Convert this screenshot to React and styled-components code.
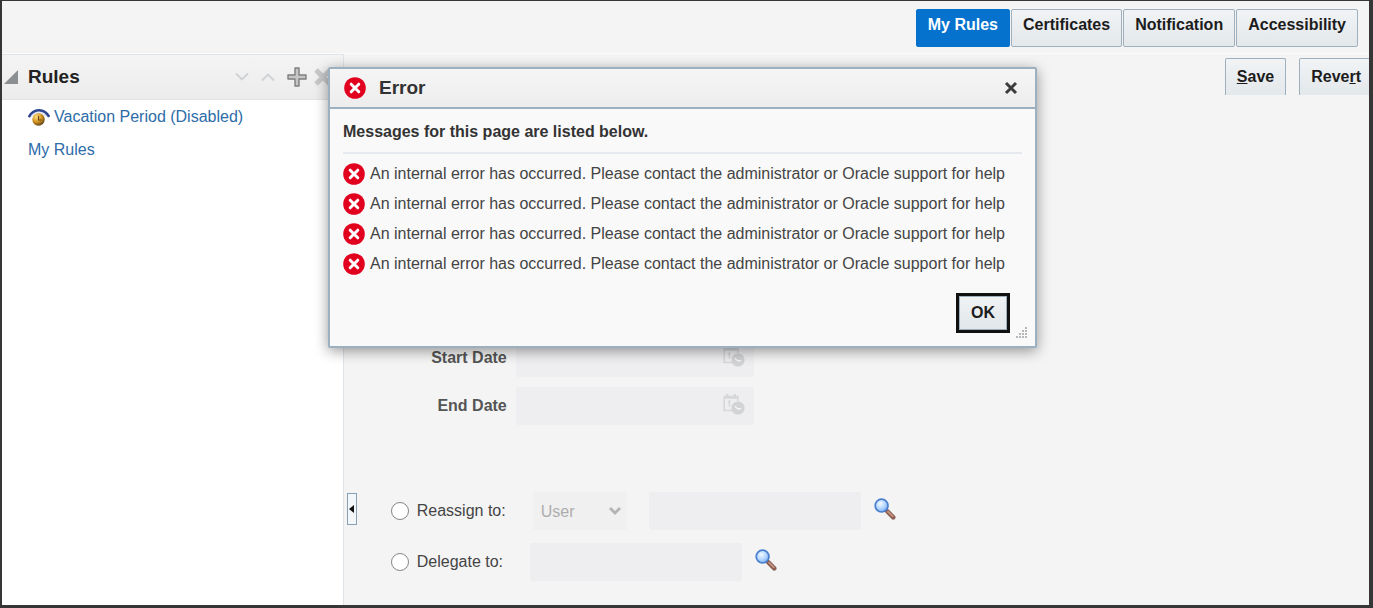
import React, { useState } from 'react'
import styled, { createGlobalStyle } from 'styled-components'

const frame = '#363636';
const pageBg = '#f4f4f4';
const line = '#dfe4e9';
const buttonLine = '#9eb0be';
const dialogLine = '#9cb0bf';
const link = '#2d6ca8';
const fieldBg = '#eeeef0';
const fontBase = '16px';
const fontTitle = '19px';

const tabs = ['My Rules', 'Certificates', 'Notification', 'Accessibility'];

const messages = [
    'An internal error has occurred. Please contact the administrator or Oracle support for help',
    'An internal error has occurred. Please contact the administrator or Oracle support for help',
    'An internal error has occurred. Please contact the administrator or Oracle support for help',
    'An internal error has occurred. Please contact the administrator or Oracle support for help',
];

function ErrorIcon() {
    return (
        <svg width="22" height="22" viewBox="0 0 22 22" aria-hidden="true">
            <circle cx="11" cy="11" r="10.8" fill="#e2001f" />
            <path d="M7.2 7.2l7.6 7.6M14.8 7.2l-7.6 7.6" stroke="#fff" strokeWidth="3" strokeLinecap="round" />
        </svg>
    );
}

function EyeClockIcon() {
    return (
        <svg width="22" height="18" viewBox="0 0 22 18" aria-hidden="true">
            <defs>
                <radialGradient id="gold" cx="0.35" cy="0.3" r="0.8">
                    <stop offset="0" stopColor="#ffdf85" />
                    <stop offset="0.5" stopColor="#d3931f" />
                    <stop offset="1" stopColor="#4a3518" />
                </radialGradient>
            </defs>
            <path d="M1 9Q10 -2 21 9L15 8H6Z" fill="#e4e7ef" />
            <path d="M0.8 9.2C5 0.6 16 -0.6 21.2 9" fill="none" stroke="#2c4590" strokeWidth="2.6" />
            <circle cx="10.5" cy="11.5" r="6.2" fill="url(#gold)" />
            <path d="M10.5 8V12H13.5" fill="none" stroke="#6b4510" strokeWidth="1.1" />
        </svg>
    );
}

function CalendarClockIcon() {
    return (
        <svg width="22" height="22" viewBox="0 0 22 22" aria-hidden="true">
            <path d="M9 17.5H1.2V3.5H14.8V8" fill="none" stroke="#d6d7d9" strokeWidth="1.6" />
            <path d="M1 4.5H15" stroke="#d6d7d9" strokeWidth="2.4" />
            <path d="M4.3 1V4M11.7 1V4" stroke="#d6d7d9" strokeWidth="2.4" />
            <path d="M4.8 9.2L6.5 8.2V13.5" fill="none" stroke="#d6d7d9" strokeWidth="1.6" />
            <circle cx="15" cy="15" r="6.6" fill="#d2d3d5" />
            <path d="M11.8 13.2L14.6 15.7H18.2" fill="none" stroke="#f4f4f5" strokeWidth="1.4" />
        </svg>
    );
}

function SearchIcon() {
    return (
        <svg width="22" height="22" viewBox="0 0 22 22" aria-hidden="true">
            <defs>
                <radialGradient id="lens" cx="0.4" cy="0.35" r="0.65">
                    <stop offset="0" stopColor="#f3faff" />
                    <stop offset="0.55" stopColor="#b9d9ff" />
                    <stop offset="1" stopColor="#7fb1f2" />
                </radialGradient>
            </defs>
            <path d="M14 14L19.4 19.6" stroke="#777" strokeWidth="4.8" strokeLinecap="round" opacity="0.4" />
            <path d="M12.5 12.5L19.2 19.2" stroke="#8f5a4a" strokeWidth="4.2" strokeLinecap="round" />
            <path d="M14 13.6L18.8 18.4" stroke="#c39a8a" strokeWidth="1.6" strokeLinecap="round" />
            <circle cx="7.6" cy="7.6" r="6.4" fill="url(#lens)" stroke="#4a7fcf" strokeWidth="1.7" />
        </svg>
    );
}

function Field({ id, label }) {
    return (
        <DateRow>
            <DateLabel htmlFor={id}>{label}</DateLabel>
            <DateBox>
                <DateInput id={id} disabled />
                <FieldButton type="button" aria-label={`Select ${label}`} disabled>
                    <CalendarClockIcon />
                </FieldButton>
            </DateBox>
        </DateRow>
    );
}

function ErrorDialog({ onClose }) {
    return (
        <Dialog role="dialog" aria-labelledby="error-title">
            <DialogHeader>
                <ErrorIcon />
                <DialogTitle id="error-title">Error</DialogTitle>
                <IconButton type="button" aria-label="Close" onClick={onClose}>
                    <svg width="14" height="14" viewBox="0 0 14 14">
                        <path d="M2 2l10 10M12 2L2 12" stroke="#3c3c3c" strokeWidth="3" />
                    </svg>
                </IconButton>
            </DialogHeader>
            <DialogBody>
                <DialogIntro>Messages for this page are listed below.</DialogIntro>
                <MessageList>
                    {messages.map((message, i) => (
                        <Message key={i}>
                            <ErrorIcon />
                            {message}
                        </Message>
                    ))}
                </MessageList>
            </DialogBody>
            <DialogFooter>
                <OkButton type="button" onClick={onClose}>OK</OkButton>
                <svg width="13" height="13" viewBox="0 0 13 13" aria-hidden="true">
                    <path
                        d="M1 12H13M4 9H13M7 6H13M10 3H13"
                        stroke="#b4b8bb"
                        strokeWidth="2"
                        strokeDasharray="2 1"
                    />
                </svg>
            </DialogFooter>
        </Dialog>
    );
}

function App() {

    const [activeTab, setActiveTab] = useState('My Rules');
    const [open, setOpen] = useState(true);

    return (
        <Page>
            <GlobalStyle />
            <TopBar>
                {tabs.map(tab => (
                    <Tab key={tab} type="button" $active={tab === activeTab} onClick={() => setActiveTab(tab)}>{tab}</Tab>
                ))}
            </TopBar>
            <Content>
                <Sidebar>
                    <SidebarHeader>
                        <svg width="14" height="14" viewBox="0 0 14 14" aria-hidden="true">
                            <path d="M14 0V14H0Z" fill="#8b8f92" />
                        </svg>
                        <SidebarTitle>Rules</SidebarTitle>
                        <SidebarTools>
                            <IconButton type="button" aria-label="Move down" disabled>
                                <svg width="14" height="10" viewBox="0 0 14 10">
                                    <path d="M1 1.5l6 6 6-6" fill="none" stroke="#cfd2d4" strokeWidth="1.8" />
                                </svg>
                            </IconButton>
                            <IconButton type="button" aria-label="Move up" disabled>
                                <svg width="14" height="10" viewBox="0 0 14 10">
                                    <path d="M1 8.5l6-6 6 6" fill="none" stroke="#cfd2d4" strokeWidth="1.8" />
                                </svg>
                            </IconButton>
                            <IconButton type="button" aria-label="Add rule">
                                <svg width="20" height="20" viewBox="0 0 20 20">
                                    <path
                                        d="M8 1H12V8H19V12H12V19H8V12H1V8H8Z"
                                        fill="#c6c6c6"
                                        stroke="#7e7e7e"
                                        strokeWidth="1.4"
                                        strokeLinejoin="round"
                                    />
                                </svg>
                            </IconButton>
                            <IconButton type="button" aria-label="Delete rule" disabled>
                                <svg width="20" height="20" viewBox="0 0 20 20">
                                    <path d="M3 3l14 14M17 3L3 17" stroke="#c6c8ca" strokeWidth="5" />
                                </svg>
                            </IconButton>
                        </SidebarTools>
                    </SidebarHeader>
                    <RuleList>
                        <li>
                            <RuleLink href="#vacation"><EyeClockIcon />Vacation Period (Disabled)</RuleLink>
                        </li>
                        <li>
                            <RuleLink href="#rules">My Rules</RuleLink>
                        </li>
                    </RuleList>
                </Sidebar>
                <Splitter>
                    <SplitterHandle type="button" aria-label="Collapse pane">
                        <svg width="5" height="8" viewBox="0 0 5 8">
                            <path d="M5 0V8L0 4Z" fill="#111" />
                        </svg>
                    </SplitterHandle>
                </Splitter>
                <Main>
                    <Toolbar>
                        <ToolbarButton type="button"><u>S</u>ave</ToolbarButton>
                        <ToolbarButton type="button">Reve<u>r</u>t</ToolbarButton>
                    </Toolbar>
                    <Form>
                        <Field id="start" label="Start Date" />
                        <Field id="end" label="End Date" />
                        <Options>
                            <OptionRow>
                                <Option>
                                    <Radio type="radio" name="action" />
                                    Reassign to:
                                </Option>
                                <SelectBox>
                                    <Select aria-label="Reassign type" disabled>
                                        <option>User</option>
                                    </Select>
                                    <svg width="14" height="10" viewBox="0 0 14 10" aria-hidden="true">
                                        <path d="M2 2l5 5 5-5" fill="none" stroke="#b4b4b4" strokeWidth="2.8" />
                                    </svg>
                                </SelectBox>
                                <TextInput aria-label="Reassign to" disabled />
                                <FieldButton type="button" aria-label="Search reassignee">
                                    <SearchIcon />
                                </FieldButton>
                            </OptionRow>
                            <OptionRow>
                                <Option>
                                    <Radio type="radio" name="action" />
                                    Delegate to:
                                </Option>
                                <TextInput aria-label="Delegate to" disabled />
                                <FieldButton type="button" aria-label="Search delegate">
                                    <SearchIcon />
                                </FieldButton>
                            </OptionRow>
                        </Options>
                    </Form>
                </Main>
            </Content>
            {open && <ErrorDialog onClose={() => setOpen(false)} />}
        </Page>
    );
}

const GlobalStyle = createGlobalStyle`
    * {
        box-sizing: border-box;
        margin: 0;
        padding: 0;
    }

    body {
        background: ${frame};
    }

    body, button, input, select {
        font-family: "Liberation Sans", Arial, sans-serif;
        font-size: ${fontBase};
        color: #333;
    }

    svg {
        display: block;
        flex: none;
    }
`;

const Page = styled.div`
    position: relative;
    display: flex;
    flex-direction: column;
    min-height: 100vh;
    background: ${pageBg};
    border: solid ${frame};
    border-width: 1px 4px 3px 2px;
    overflow: hidden;
`;

const TopBar = styled.nav`
    display: flex;
    justify-content: flex-end;
    gap: 1px;
    padding: 8px 11px 6px;
    border-bottom: 1px solid #fbfbfb;
`;

const Tab = styled.button`
    height: 38px;
    padding: 0 11px 6px;
    font-weight: 700;
    color: ${({ $active }) => ($active ? '#fff' : '#1c1c1c')};
    background: ${({ $active }) => ($active ? '#0572ce' : 'linear-gradient(#f1f3f5, #e3e8eb)')};
    border: 1px solid ${({ $active }) => ($active ? '#0572ce' : buttonLine)};
    border-radius: 2px;
`;

const Content = styled.div`
    display: flex;
    flex: 1;
`;

const Sidebar = styled.aside`
    flex: none;
    width: 25%;
    background: #fff;
    border: solid ${line};
    border-width: 1px 1px 0 0;
`;

const SidebarHeader = styled.div`
    display: flex;
    align-items: center;
    height: 45px;
    padding: 0 10px 0 2px;
    background: linear-gradient(#f4f4f4, #ececec);
    border-bottom: 1px solid ${line};
`;

const SidebarTitle = styled.h2`
    margin-left: 10px;
    font-size: ${fontTitle};
    color: #222;
`;

const SidebarTools = styled.div`
    display: flex;
    align-items: center;
    gap: 12px;
    margin-left: auto;

    > :last-child {
        margin-left: -6px;
    }
`;

const IconButton = styled.button`
    display: flex;
    background: transparent;
    border: 0;
`;

const FieldButton = styled(IconButton)`
    padding-bottom: 4px;
`;

const RuleList = styled.ul`
    display: flex;
    flex-direction: column;
    gap: 13px;
    padding: 7px 26px;
    list-style: none;
`;

const RuleLink = styled.a`
    display: flex;
    align-items: center;
    gap: 4px;
    line-height: 20px;
    color: ${link};
    text-decoration: none;
`;

const Splitter = styled.div`
    flex: none;
    width: 12px;
    padding: 439px 0 0 3px;
`;

const SplitterHandle = styled.button`
    display: flex;
    align-items: center;
    justify-content: center;
    width: 10px;
    height: 32px;
    background: #f4f7f9;
    border: 1px solid #87a0b4;
`;

const Main = styled.main`
    flex: 1;
    min-width: 0;
`;

const Toolbar = styled.div`
    display: flex;
    justify-content: flex-end;
    gap: 13px;
    margin: 4px -4px 0 0;
`;

const ToolbarButton = styled.button`
    height: 37px;
    padding: 0 11px;
    font-weight: 700;
    color: #1c1c1c;
    background: linear-gradient(#f1f3f5, #e3e8eb);
    border: solid ${buttonLine};
    border-width: 1px 1px 0;
    border-radius: 2px 2px 0 0;
`;

const Form = styled.form`
    display: flex;
    flex-direction: column;
    gap: 10px;
    padding: 244px 0 24px 35px;
`;

const DateRow = styled.div`
    display: flex;
    align-items: center;
    gap: 9px;
`;

const DateLabel = styled.label`
    width: 116px;
    font-weight: 700;
    color: #555;
    text-align: right;
`;

const DateBox = styled.div`
    display: flex;
    align-items: center;
    width: 238px;
    height: 38px;
    padding-right: 9px;
    background: ${fieldBg};
    border-radius: 3px;
`;

const DateInput = styled.input`
    flex: 1;
    min-width: 0;
    height: 100%;
    background: transparent;
    border: 0;
`;

const Options = styled.div`
    display: flex;
    flex-direction: column;
    gap: 13px;
    margin-top: 57px;
`;

const OptionRow = styled.div`
    display: flex;
    align-items: center;
`;

const Option = styled.label`
    display: flex;
    align-items: center;
    gap: 8px;
    margin-right: 27px;
    color: #444;
`;

const Radio = styled.input`
    appearance: none;
    width: 18px;
    height: 18px;
    background: #fff;
    border: 1px solid #858585;
    border-radius: 50%;

    &:checked {
        border-width: 5px;
    }
`;

const SelectBox = styled.div`
    display: flex;
    align-items: center;
    width: 94px;
    height: 38px;
    margin-right: 22px;
    padding: 0 5px 0 8px;
    background: #f0f0f0;
    border-radius: 3px;
`;

const Select = styled.select`
    appearance: none;
    flex: 1;
    min-width: 0;
    color: #adadad;
    background: transparent;
    border: 0;
    opacity: 1;
`;

const TextInput = styled.input`
    width: 212px;
    height: 38px;
    margin-right: 13px;
    background: ${fieldBg};
    border: 0;
    border-radius: 3px;
`;

const Dialog = styled.section`
    position: absolute;
    top: 66px;
    left: 326px;
    width: 709px;
    background: #f9f9f9;
    border: 2px solid ${dialogLine};
    border-radius: 2px;
    box-shadow: 0 3px 14px rgba(0, 0, 0, 0.4);
`;

const DialogHeader = styled.header`
    display: flex;
    align-items: center;
    height: 40px;
    padding: 0 17px 0 14px;
    background: linear-gradient(#f5f5f5, #ededed);
    border-bottom: 2px solid ${dialogLine};
`;

const DialogTitle = styled.h1`
    flex: 1;
    margin-left: 13px;
    font-size: ${fontTitle};
`;

const DialogBody = styled.div`
    padding: 0 13px;
`;

const DialogIntro = styled.p`
    padding: 13px 0 10px;
    font-weight: 700;
    line-height: 20px;
    border-bottom: 2px solid #e6eaee;
`;

const MessageList = styled.ul`
    padding-top: 5px;
    list-style: none;
`;

const Message = styled.li`
    display: flex;
    align-items: center;
    gap: 5px;
    height: 30px;
    color: #444;
`;

const DialogFooter = styled.footer`
    display: flex;
    align-items: flex-end;
    justify-content: flex-end;
    gap: 5px;
    padding: 14px 7px 8px;

    > button {
        margin-bottom: 5px;
    }
`;

const OkButton = styled.button`
    width: 54px;
    height: 40px;
    font-weight: 700;
    color: #1c1c1c;
    background: linear-gradient(#f1f3f5, #e0e6ea);
    border: 3px solid #111;
    box-shadow: inset 0 0 0 1px ${buttonLine};
`;

export default App;
